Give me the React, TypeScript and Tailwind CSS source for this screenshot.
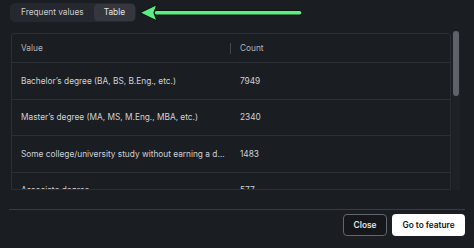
import React from 'react'

const ROWS = [
  { value: "Bachelor’s degree (BA, BS, B.Eng., etc.)", count: '7949' },
  { value: "Master’s degree (MA, MS, M.Eng., MBA, etc.)", count: '2340' },
  { value: 'Some college/university study without earning a degree', count: '1483' },
  { value: 'Associate degree', count: '577' },
]

function Arrow() {
  return (
    <svg width="170" height="20" viewBox="0 0 170 20" className="ml-[2px]">
      <g stroke="#0d1a12" strokeWidth="1.2" strokeLinejoin="round">
        <rect x="16" y="7.5" width="148" height="4.5" rx="2.2" fill="#5cee86" />
        <path d="M2 9.8 L19 1.5 L16 9.8 L19 18 Z" fill="#5cee86" />
      </g>
    </svg>
  )
}

export default function App() {
  return (
    <div
      className="w-[474px] h-[248px] bg-[#1a1d22] overflow-hidden flex flex-col text-[#d4d6da]"
      style={{ fontFamily: 'Inter, "Noto Sans", sans-serif' }}
    >
      {/* tabs */}
      <div className="flex items-center pl-[10px] pt-[3px] h-[22px]">
        <div className="flex items-center h-[19px] rounded-[5px] bg-[#25282e] p-[1px]">
          <button className="h-full px-[10px] text-[8.3px] text-[#c9cbcf]">Frequent values</button>
          <button className="h-full px-[10px] rounded-[4px] bg-[#34373e] text-[8.3px] text-[#e2e4e7]">Table</button>
        </div>
        <Arrow />
      </div>

      {/* table */}
      <div className="flex ml-[11px] mt-[11px] h-[157px]">
        <div className="w-[440px] border border-[#2b2f36] rounded-t-[3px] overflow-hidden">
          <div className="flex items-center h-[29px] border-b border-[#2b2f36] text-[8.3px] text-[#b4b7bc]">
            <div className="w-[219px] pl-[9px] flex items-center justify-between">
              <span>Value</span>
              <span className="w-px h-[11px] bg-[#44484f]" />
            </div>
            <div className="pl-[9px]">Count</div>
          </div>
          {ROWS.map((row, i) => (
            <div key={i} className="flex items-center h-[36.5px] border-b border-[#2b2f36] text-[8.3px] text-[#d0d2d6]">
              <div className="w-[219px] pl-[9px] pr-[6px] truncate">{row.value}</div>
              <div className="pl-[9px]">{row.count}</div>
            </div>
          ))}
        </div>
        <div className="w-[8px] ml-[1px] -mt-[2px] bg-[#1e2126]">
          <div className="h-[65px] mx-[1px] rounded-[3px] bg-[#5f6268]" />
        </div>
      </div>

      {/* footer */}
      <div className="mt-[19px] mx-[9px] border-t border-[#383c43]" />
      <div className="flex justify-end gap-[5px] pr-[9px] pt-[4px]">
        <button className="h-[22px] w-[44px] rounded-[4px] border border-[#62666d] bg-[#15171b] text-[8.3px] font-semibold text-[#e4e6e9]">
          Close
        </button>
        <button className="h-[22px] w-[73px] rounded-[4px] bg-white text-[8.3px] font-semibold text-[#111316]">
          Go to feature
        </button>
      </div>
    </div>
  )
}
